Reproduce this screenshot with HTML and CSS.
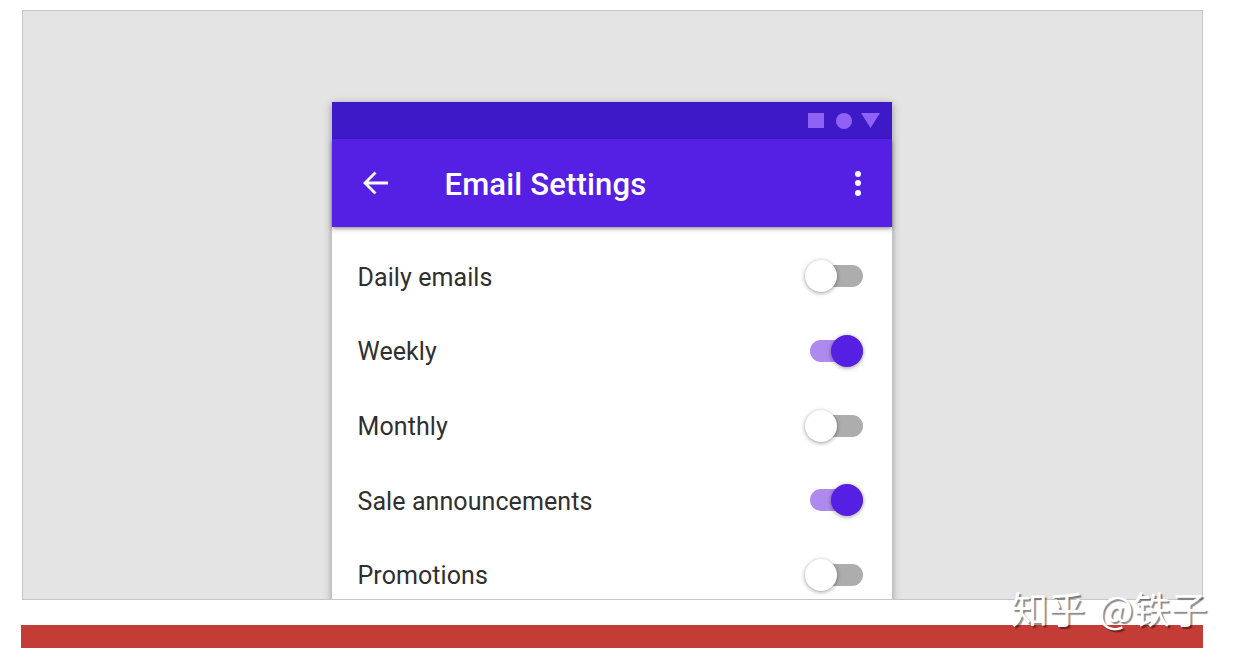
FILE: index.html
```html
<!DOCTYPE html>
<html lang="zh">
<head>
    <meta charset="UTF-8">
    <meta name="viewport" content="width=device-width, initial-scale=1.0">
    <title>Email Settings</title>
    <link rel="stylesheet" href="styles.css">
</head>
<body>
    <div class="frame">
        <div class="phone">
            <div class="status-bar">
                <span class="status-square"></span>
                <span class="status-circle"></span>
                <svg class="status-triangle" width="19" height="15" viewBox="0 0 19 15"><path d="M0 0H19L9.5 15Z"/></svg>
            </div>
            <div class="app-bar">
                <svg class="back-icon" width="28" height="26" viewBox="0 0 28 26"><path d="M26 13H3M13.5 2.5L3 13L13.5 23.5"/></svg>
                <h1 class="app-title">Email Settings</h1>
                <div class="more-icon"><span></span><span></span><span></span></div>
            </div>
            <div class="list">
                <div class="row"><span>Daily emails</span><div class="switch"></div></div>
                <div class="row"><span>Weekly</span><div class="switch on"></div></div>
                <div class="row"><span>Monthly</span><div class="switch"></div></div>
                <div class="row"><span>Sale announcements</span><div class="switch on"></div></div>
                <div class="row"><span>Promotions</span><div class="switch"></div></div>
            </div>
        </div>
    </div>
    <div class="red-bar"></div>
    <div class="watermark">知乎 @铁子</div>
</body>
</html>
```
FILE: styles.css
```css
html, body {
    margin: 0;
    background-color: #fff;
    overflow: hidden;
}
body {
    height: 663px;
    padding: 10px 37px 0 22px;
    box-sizing: border-box;
    font-family: Roboto, "Liberation Sans", sans-serif;
}
.frame {
    display: flex;
    justify-content: center;
    align-items: flex-start;
    height: 590px;
    box-sizing: border-box;
    padding-top: 91px;
    background-color: #e4e4e4;
    border: 1px solid #c6c6c6;
    overflow: hidden;
}
.phone {
    width: 560px;
    flex: none;
    margin-right: 2px;
    background-color: #fff;
    box-shadow: 0 2px 8px rgba(0, 0, 0, 0.35);
}
.status-bar {
    display: flex;
    justify-content: flex-end;
    align-items: flex-start;
    height: 37px;
    box-sizing: border-box;
    padding: 11px 12px 0 0;
    background-color: #3e19c8;
}
.status-square {
    width: 16px;
    height: 15px;
    margin-right: 12px;
    background-color: #8f62f5;
}
.status-circle {
    width: 16px;
    height: 16px;
    margin-right: 9px;
    border-radius: 50%;
    background-color: #8f62f5;
}
.status-triangle {
    fill: #8f62f5;
}
.app-bar {
    position: relative;
    display: flex;
    align-items: center;
    height: 88px;
    padding: 0 31px 0 30px;
    background-color: #561fe4;
    color: #fff;
    box-shadow: 0 2px 4px rgba(0, 0, 0, 0.4);
}
.back-icon {
    flex: none;
    fill: none;
    stroke: #fff;
    stroke-width: 2.8;
}
.app-title {
    flex: 1;
    margin: 2px 0 0 55px;
    font-size: 31px;
    font-weight: 500;
    letter-spacing: 0.17px;
}
.more-icon {
    display: flex;
    flex-direction: column;
    gap: 3.5px;
}
.more-icon span {
    width: 6px;
    height: 6px;
    border-radius: 50%;
    background-color: #fff;
}
.list {
    padding-top: 13px;
}
.row {
    display: flex;
    justify-content: space-between;
    align-items: center;
    height: 74.67px;
    padding: 0 29px 0 26px;
    font-size: 25px;
    letter-spacing: 0.08px;
    color: #2f2f2f;
}
.switch {
    position: relative;
    width: 53px;
    height: 22px;
    margin-bottom: 2px;
    border-radius: 11px;
    background-color: #adadad;
}
.switch::after {
    content: "";
    position: absolute;
    top: -5px;
    left: -5px;
    width: 32px;
    height: 32px;
    border-radius: 50%;
    background-color: #fff;
    box-shadow: 0 1px 4px rgba(0, 0, 0, 0.4);
}
.switch.on {
    background-color: #ae8aee;
}
.switch.on::after {
    left: 21px;
    background-color: #561fe4;
}
.red-bar {
    height: 23px;
    margin: 25px 0 0 -1px;
    background-color: #c43c36;
}
.watermark {
    position: absolute;
    top: 581px;
    left: 1011px;
    font-family: "Noto Sans CJK SC", sans-serif;
    font-size: 37px;
    word-spacing: 5px;
    white-space: nowrap;
    color: #fff;
    text-shadow: 2px 2px 1px rgba(0, 0, 0, 0.45);
}
```
